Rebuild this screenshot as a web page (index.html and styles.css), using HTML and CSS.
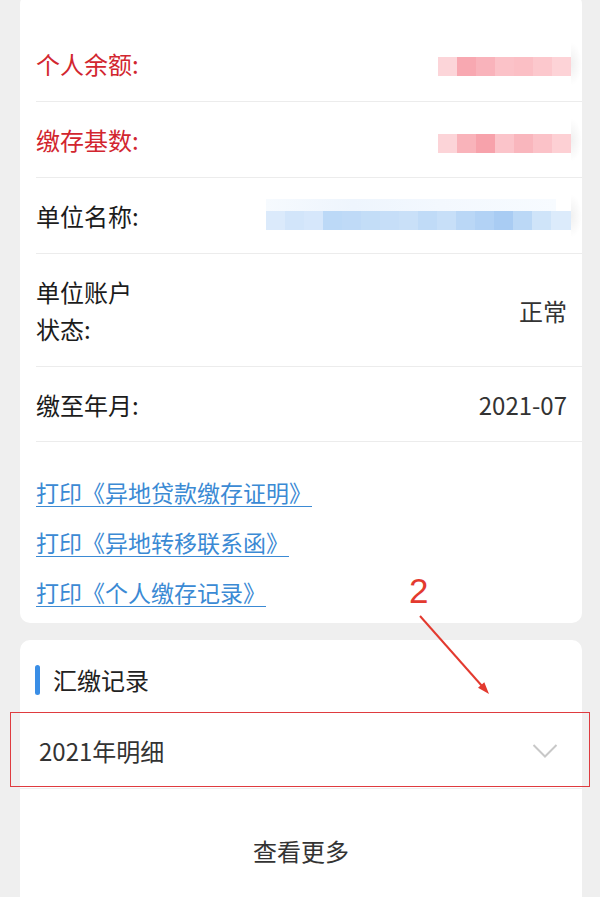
FILE: index.html
```html
<!DOCTYPE html>
<html lang="zh-CN">
<head>
<meta charset="utf-8">
<title>公积金查询</title>
<link rel="stylesheet" href="styles.css">
</head>
<body>
<div class="page">
  <section class="card info">
    <div class="row">
      <span class="label red">个人余额:</span>
      <span class="mask"><span class="mosaic m-red1"></span><span class="ghost"></span></span>
    </div>
    <div class="row">
      <span class="label red">缴存基数:</span>
      <span class="mask"><span class="mosaic m-red2"></span><span class="ghost"></span></span>
    </div>
    <div class="row">
      <span class="label">单位名称:</span>
      <span class="mask"><span class="mosaic m-blue"></span><span class="ghost"></span></span>
    </div>
    <div class="row tall">
      <span class="label">单位账户<br>状态:</span>
      <span class="value">正常</span>
    </div>
    <div class="row short">
      <span class="label">缴至年月:</span>
      <span class="value">2021-07</span>
    </div>
    <div class="links">
      <div class="link-line"><a href="#">打印《异地贷款缴存证明》</a></div>
      <div class="link-line"><a href="#">打印《异地转移联系函》</a></div>
      <div class="link-line"><a href="#">打印《个人缴存记录》</a></div>
    </div>
  </section>

  <section class="card records">
    <div class="rec-head">
      <span class="bar"></span>
      <span class="rec-title">汇缴记录</span>
    </div>
    <div class="select-row">
      <span class="select-text">2021年明细</span>
      <svg class="chev" width="26" height="16" viewBox="0 0 26 16"><polyline points="1.5,2 13,13.5 24.5,2" fill="none" stroke="#c8c8c8" stroke-width="2"/></svg>
      <span class="hl-box"></span>
    </div>
    <div class="more">查看更多</div>
  </section>

  <span class="anno-num">2</span>
  <svg class="anno-arrow" width="600" height="897" viewBox="0 0 600 897">
    <line x1="420" y1="616" x2="482" y2="686" stroke="#e33a2f" stroke-width="2"/>
    <polygon points="489,694 484.3,682.2 478,687.8" fill="#e33a2f"/>
  </svg>
</div>
</body>
</html>
```

FILE: styles.css
```css
html, body {
  margin: 0;
  padding: 0;
}
body {
  background: #efefef;
  font-family: "Noto Sans CJK SC", "Noto Sans", sans-serif;
  color: #333;
  overflow: hidden;
}
.page {
  position: relative;
  width: 600px;
  height: 897px;
  overflow: hidden;
}
.card {
  background: #fff;
  margin-left: 20px;
  width: 562px;
  border-radius: 10px;
}
.info {
  margin-top: -6px;
  padding-top: 32px;
  padding-bottom: 6px;
}
.row {
  display: flex;
  align-items: center;
  justify-content: space-between;
  height: 75px;
  margin-left: 16px;
  padding-right: 15px;
  border-bottom: 1px solid #ececec;
}
.row.tall { height: 112px; }
.row.short { height: 74px; }
.label {
  font-size: 24px;
  line-height: 37px;
  color: #1c1c1c;
}
.label.red { color: #d2262f; }
.value {
  font-size: 24px;
  color: #333;
}
.mask {
  display: flex;
  align-items: center;
  margin-right: -15px;
}
.mosaic {
  display: block;
  height: 19px;
}
.m-red1 {
  width: 133px;
  margin-top: 5px;
  background: linear-gradient(90deg,
    #fcd5d9 0 19px, #f8a8b1 19px 38px, #f9b3bb 38px 57px, #fbc2c8 57px 76px,
    #fbbfc5 76px 95px, #fcc8cd 95px 114px, #fdd3d7 114px 133px);
}
.m-red2 {
  width: 133px;
  margin-top: 7px;
  background: linear-gradient(90deg,
    #fcd4d8 0 19px, #f9b3ba 19px 38px, #f7a2ab 38px 57px, #fbc4ca 57px 76px,
    #f9b6bd 76px 95px, #fbc2c8 95px 114px, #fdd0d4 114px 133px);
}
.m-blue {
  width: 305px;
  height: 31px;
  margin-top: -2px;
  background:
    linear-gradient(90deg,
      #dbeafb 0 19px, #d2e5fa 19px 38px, #d6e7fb 38px 57px, #bcd9f7 57px 76px,
      #bfdaf7 76px 95px, #c3ddf7 95px 114px, #c6def8 114px 133px, #c9e0f8 133px 152px,
      #c0dbf7 152px 171px, #c7dff8 171px 190px, #bad7f6 190px 209px, #b2d2f5 209px 228px,
      #a9ccf3 228px 247px, #bbd8f6 247px 266px, #cfe4f9 266px 285px, #dcebfb 285px 305px)
      0 12px / 305px 19px no-repeat,
    linear-gradient(90deg, #f6fafe 0, #eef5fd 30%, #f3f8fe 60%, #f7fbff 100%)
      0 0 / 290px 12px no-repeat;
}
.ghost {
  display: block;
  width: 11px;
  height: 44px;
  background: radial-gradient(ellipse at 0% 50%, rgba(0,0,0,0.06), rgba(0,0,0,0) 70%);
}
.links {
  padding: 25px 0 0 16px;
}
.link-line {
  height: 50px;
  line-height: 50px;
}
.link-line a {
  font-size: 23px;
  color: #3b8ad4;
  text-decoration: underline;
  text-underline-offset: 4px;
  text-decoration-thickness: 1px;
}
.records {
  margin-top: 17px;
  padding-bottom: 40px;
}
.rec-head {
  display: flex;
  align-items: center;
  height: 73px;
  box-sizing: border-box;
  padding: 6px 0 0 15px;
}
.bar {
  display: block;
  width: 5px;
  height: 30px;
  border-radius: 3px;
  background: #3a8ee6;
  margin-right: 13px;
}
.rec-title {
  font-size: 24px;
  color: #222;
}
.select-row {
  position: relative;
  display: flex;
  align-items: center;
  justify-content: space-between;
  height: 75px;
  padding: 0 24px 0 19px;
  border-bottom: 1px solid #eeeeee;
}
.select-text {
  font-size: 24px;
  color: #333;
}
.chev { display: block; }
.hl-box {
  position: absolute;
  left: -10px;
  right: -8px;
  top: -1px;
  bottom: 1px;
  border: 1.5px solid #df3b3f;
  pointer-events: none;
}
.more {
  height: 122px;
  display: flex;
  align-items: center;
  justify-content: center;
  font-size: 24px;
  color: #333;
}
.anno-num {
  position: absolute;
  left: 409px;
  top: 573px;
  font-family: "Liberation Sans", Arial, sans-serif;
  font-size: 35px;
  line-height: 35px;
  color: #e33a2f;
}
.anno-arrow {
  position: absolute;
  left: 0;
  top: 0;
  pointer-events: none;
}
```
